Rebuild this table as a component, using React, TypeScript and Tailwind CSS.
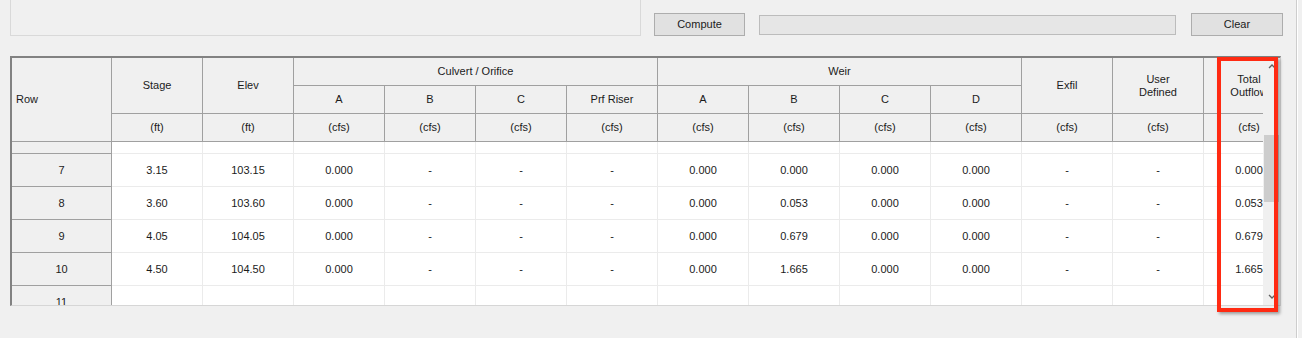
import React from "react"

type RowData = { n: string; cells: string[] }

const rows: RowData[] = [
  { n: "7", cells: ["3.15", "103.15", "0.000", "-", "-", "-", "0.000", "0.000", "0.000", "0.000", "-", "-", "0.000"] },
  { n: "8", cells: ["3.60", "103.60", "0.000", "-", "-", "-", "0.000", "0.053", "0.000", "0.000", "-", "-", "0.053"] },
  { n: "9", cells: ["4.05", "104.05", "0.000", "-", "-", "-", "0.000", "0.679", "0.000", "0.000", "-", "-", "0.679"] },
  { n: "10", cells: ["4.50", "104.50", "0.000", "-", "-", "-", "0.000", "1.665", "0.000", "0.000", "-", "-", "1.665"] },
  { n: "11", cells: ["", "", "", "", "", "", "", "", "", "", "", "", ""] },
]

const units = ["(ft)", "(ft)", "(cfs)", "(cfs)", "(cfs)", "(cfs)", "(cfs)", "(cfs)", "(cfs)", "(cfs)", "(cfs)", "(cfs)", "(cfs)"]
const subCols = ["A", "B", "C", "Prf Riser", "A", "B", "C", "D"]

const hcell = "flex items-center justify-center text-center border-r border-b border-[#a0a0a0] bg-[#f0f0f0] leading-[13px]"

function Chevron({ up }: { up?: boolean }) {
  return (
    <svg width="8" height="5" viewBox="0 0 8 5">
      <polyline
        points={up ? "1,4 4,1 7,4" : "1,1 4,4 7,1"}
        fill="none"
        stroke="#606060"
        strokeWidth="1.3"
      />
    </svg>
  )
}

export default function App() {
  return (
    <div className="relative flex w-[1302px] h-[338px] bg-[#f0f0f0] overflow-hidden font-['Liberation_Sans',Arial,sans-serif] text-[11px] text-[#1b1b1b]">
      <div className="flex flex-col w-[1296px]">
        {/* top toolbar */}
        <div className="flex h-[56px] items-start">
          <div className="ml-[10px] w-[631px] h-[36px] border-l border-r border-b border-[#d9d9d9]" />
          <button className="ml-[13px] mt-[13px] w-[91px] h-[23px] border border-[#adadad] bg-[#e1e1e1] flex items-center justify-center">
            Compute
          </button>
          <div className="ml-[14px] mt-[15px] w-[417px] h-[20px] border border-[#bcbcbc] bg-[#e6e6e6]" />
          <button className="ml-[15px] mt-[13px] w-[92px] h-[23px] border border-[#adadad] bg-[#e1e1e1] flex items-center justify-center">
            Clear
          </button>
        </div>

        {/* grid */}
        <div className="ml-[10px] w-[1271px] h-[250px] flex border-l-2 border-t-2 border-l-[#828282] border-t-[#828282] border-r border-b border-r-[#d6d6d6] border-b-[#d6d6d6] bg-white">
          <div className="w-[1251px] h-full overflow-hidden">
            <div className="w-[1284px]">
              <div className="grid grid-cols-[100px_repeat(13,91px)] grid-rows-[28px_28px_28px]">
                <div className={`${hcell} row-span-3 !justify-start pl-[4px]`}>Row</div>
                <div className={`${hcell} row-span-2`}>Stage</div>
                <div className={`${hcell} row-span-2`}>Elev</div>
                <div className={`${hcell} col-span-4`}>Culvert / Orifice</div>
                <div className={`${hcell} col-span-4`}>Weir</div>
                <div className={`${hcell} row-span-2`}>Exfil</div>
                <div className={`${hcell} row-span-2`}>
                  User
                  <br />
                  Defined
                </div>
                <div className={`${hcell} row-span-2`}>
                  Total
                  <br />
                  Outflow
                </div>
                {subCols.map((s, i) => (
                  <div key={"s" + i} className={hcell}>
                    {s}
                  </div>
                ))}
                {units.map((u, i) => (
                  <div key={"u" + i} className={hcell}>
                    {u}
                  </div>
                ))}
              </div>

              {/* partially scrolled row */}
              <div className="grid grid-cols-[100px_repeat(13,91px)] h-[12px]">
                <div className="bg-[#f0f0f0] border-r border-b border-[#a0a0a0]" />
                {units.map((_, i) => (
                  <div key={"p" + i} className="border-r border-b border-[#ebebeb]" />
                ))}
              </div>

              {rows.map((r) => (
                <div key={r.n} className="grid grid-cols-[100px_repeat(13,91px)] h-[33px]">
                  <div className="flex items-center justify-center bg-[#f0f0f0] border-r border-b border-[#a0a0a0]">
                    {r.n}
                  </div>
                  {r.cells.map((c, i) => (
                    <div key={i} className="flex items-center justify-center border-r border-b border-[#ebebeb]">
                      {c}
                    </div>
                  ))}
                </div>
              ))}
            </div>
          </div>

          {/* vertical scrollbar */}
          <div className="w-[17px] h-full flex flex-col bg-[#f0f0f0]">
            <div className="h-[17px] flex items-center justify-center">
              <Chevron up />
            </div>
            <div className="h-[60px]" />
            <div className="h-[67px] mx-[1px] bg-[#cdcdcd]" />
            <div className="flex-1" />
            <div className="h-[17px] flex items-center justify-center">
              <Chevron />
            </div>
          </div>
        </div>
      </div>

      {/* window edge */}
      <div className="w-px h-full bg-[#cdcdcd]" />
      <div className="w-px h-full bg-white" />

      {/* annotation highlight */}
      <div className="absolute left-[1217px] top-[57px] w-[61px] h-[255px] border-4 border-[#ff2a12] shadow-[2px_2px_3px_rgba(0,0,0,0.35)]" />
    </div>
  )
}
